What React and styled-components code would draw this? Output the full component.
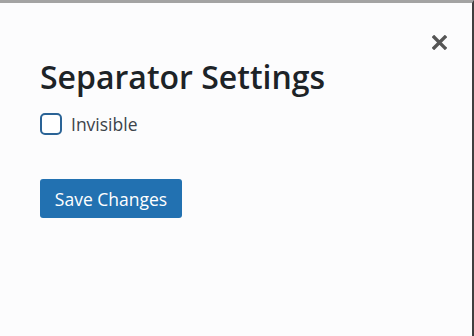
import styled, { createGlobalStyle } from "styled-components";

const GlobalStyle = createGlobalStyle`
  html, body {
    margin: 0;
    padding: 0;
    background: #fcfcfd;
  }
  #root {
    height: 336px;
  }
`;

const Frame = styled.div`
  width: 474px;
  height: 336px;
  box-sizing: border-box;
  border-top: 3px solid #a3a3a3;
  border-right: 2px solid #3f3f3f;
  background: #fcfcfd;
  font-family: "Open Sans", "Noto Sans", sans-serif;
  display: flex;
  flex-direction: column;
`;

const TopBar = styled.div`
  display: flex;
  justify-content: flex-end;
  padding: 28px 22px 0 0;
  height: 28px;
`;

const CloseButton = styled.button`
  border: none;
  background: none;
  padding: 0;
  width: 22px;
  height: 22px;
  display: flex;
  align-items: center;
  justify-content: center;
  cursor: pointer;
`;

const Body = styled.div`
  padding: 0 40px;
  display: flex;
  flex-direction: column;
  align-items: flex-start;
`;

const Title = styled.h2`
  margin: -2px 0 0;
  font-size: 32px;
  font-weight: 600;
  color: #1d2327;
  line-height: 40px;
`;

const CheckRow = styled.label`
  display: flex;
  align-items: center;
  gap: 9px;
  margin-top: 15px;
  font-size: 17.5px;
  line-height: 24px;
  color: #3c434a;
`;

const Box = styled.span`
  width: 18px;
  height: 18px;
  border: 2px solid #2a6396;
  border-radius: 5px;
  background: #fff;
`;

const SaveButton = styled.button`
  margin-top: 43px;
  width: 142px;
  height: 39px;
  border: none;
  border-radius: 3px;
  background: #2271b1;
  color: #fff;
  font-family: inherit;
  font-size: 17.5px;
  cursor: pointer;
`;

export default function App() {
  return (
    <>
      <GlobalStyle />
      <Frame>
        <TopBar>
          <CloseButton aria-label="Close">
            <svg width="15" height="15" viewBox="0 0 14 14">
              <path d="M2 2 L12 12 M12 2 L2 12" stroke="#555" strokeWidth="3.2" strokeLinecap="square" />
            </svg>
          </CloseButton>
        </TopBar>
        <Body>
          <Title>Separator Settings</Title>
          <CheckRow>
            <Box />
            Invisible
          </CheckRow>
          <SaveButton>Save Changes</SaveButton>
        </Body>
      </Frame>
    </>
  );
}
